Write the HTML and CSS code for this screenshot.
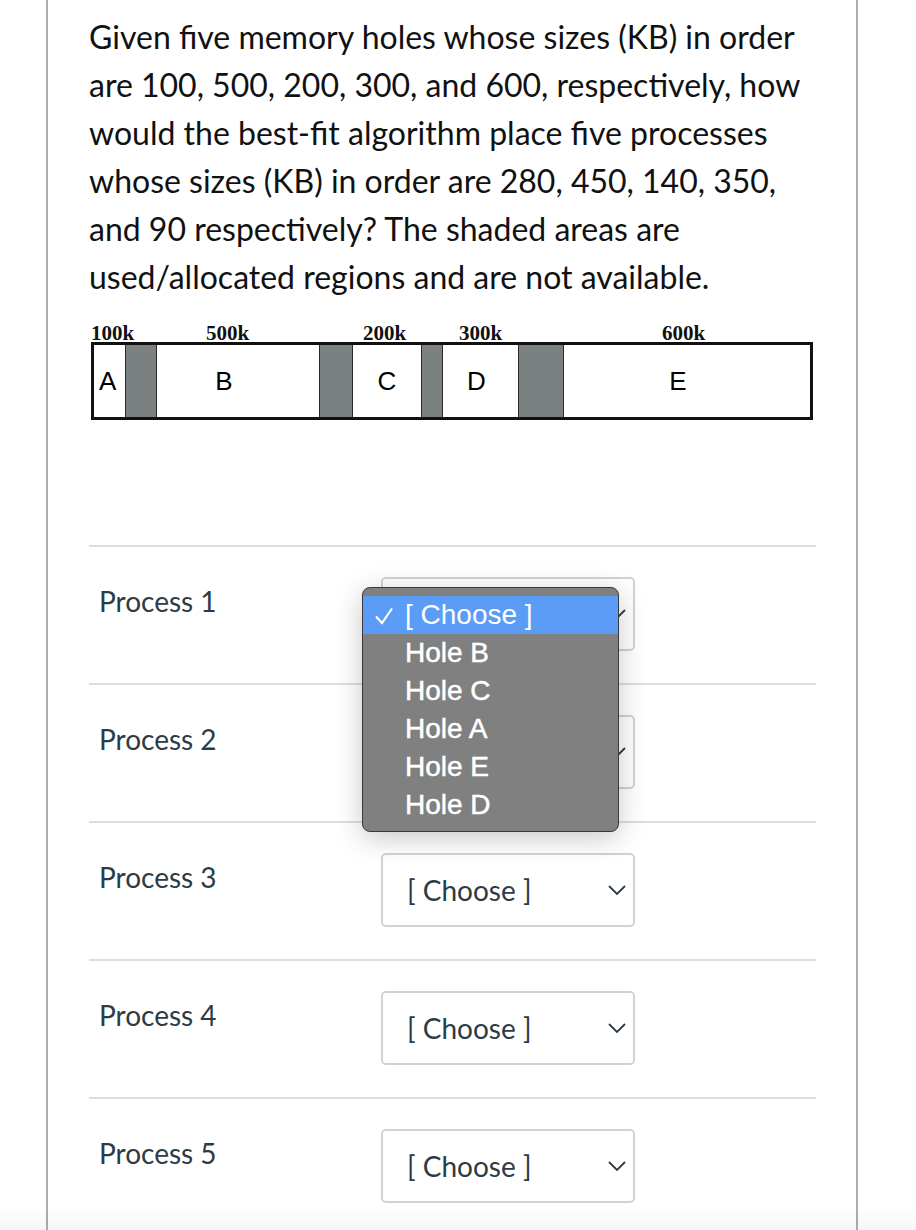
FILE: index.html
```html
<!DOCTYPE html>
<html lang="en">
<head>
    <meta charset="UTF-8">
    <meta name="viewport" content="width=device-width, initial-scale=1.0">
    <title>Best-fit Question</title>
    <link rel="stylesheet" href="styles.css">
</head>
<body>
    <div class="page">
        <p class="question">Given five memory holes whose sizes (KB) in order are 100, 500, 200, 300, and 600, respectively, how would the best-fit algorithm place five processes whose sizes (KB) in order are 280, 450, 140, 350, and 90 respectively? The shaded areas are used/allocated regions and are not available.</p>

        <div class="diagram">
            <div class="sizes">
                <span class="size s-a">100k</span>
                <span class="size s-b">500k</span>
                <span class="size s-c">200k</span>
                <span class="size s-d">300k</span>
                <span class="size s-e">600k</span>
            </div>
            <div class="bar">
                <div class="hole h-a">A</div>
                <div class="used u-1"></div>
                <div class="hole h-b">B</div>
                <div class="used u-2"></div>
                <div class="hole h-c">C</div>
                <div class="used u-3"></div>
                <div class="hole h-d">D</div>
                <div class="used u-4"></div>
                <div class="hole h-e">E</div>
            </div>
        </div>

        <div class="answers">
            <div class="answer-row">
                <div class="answer-label">Process 1</div>
                <div class="select-wrap">
                    <div class="select">
                        <span>[ Choose ]</span>
                        <svg class="chevron" width="18" height="10" viewBox="0 0 18 10"><polyline points="1,1 9,9 17,1" fill="none" stroke="#2d3b45" stroke-width="1.8"/></svg>
                    </div>
                    <div class="menu">
                        <div class="menu-item active">
                            <svg class="check" width="20" height="18" viewBox="0 0 20 18"><polyline points="2,9.5 8,16 18,1.5" fill="none" stroke="#fff" stroke-width="2.2"/></svg>
                            [ Choose ]
                        </div>
                        <div class="menu-item">Hole B</div>
                        <div class="menu-item">Hole C</div>
                        <div class="menu-item">Hole A</div>
                        <div class="menu-item">Hole E</div>
                        <div class="menu-item">Hole D</div>
                    </div>
                </div>
            </div>

            <div class="answer-row">
                <div class="answer-label">Process 2</div>
                <div class="select-wrap">
                    <div class="select">
                        <span>[ Choose ]</span>
                        <svg class="chevron" width="18" height="10" viewBox="0 0 18 10"><polyline points="1,1 9,9 17,1" fill="none" stroke="#2d3b45" stroke-width="1.8"/></svg>
                    </div>
                </div>
            </div>

            <div class="answer-row">
                <div class="answer-label">Process 3</div>
                <div class="select-wrap">
                    <div class="select">
                        <span>[ Choose ]</span>
                        <svg class="chevron" width="18" height="10" viewBox="0 0 18 10"><polyline points="1,1 9,9 17,1" fill="none" stroke="#2d3b45" stroke-width="1.8"/></svg>
                    </div>
                </div>
            </div>

            <div class="answer-row">
                <div class="answer-label">Process 4</div>
                <div class="select-wrap">
                    <div class="select">
                        <span>[ Choose ]</span>
                        <svg class="chevron" width="18" height="10" viewBox="0 0 18 10"><polyline points="1,1 9,9 17,1" fill="none" stroke="#2d3b45" stroke-width="1.8"/></svg>
                    </div>
                </div>
            </div>

            <div class="answer-row">
                <div class="answer-label">Process 5</div>
                <div class="select-wrap">
                    <div class="select">
                        <span>[ Choose ]</span>
                        <svg class="chevron" width="18" height="10" viewBox="0 0 18 10"><polyline points="1,1 9,9 17,1" fill="none" stroke="#2d3b45" stroke-width="1.8"/></svg>
                    </div>
                </div>
            </div>
        </div>
    </div>
    <div class="bottom-fade"></div>
</body>
</html>
```

FILE: styles.css
```css
body { margin: 0; background: #fff; font-family: Lato, "Open Sans", sans-serif; }
.page { margin-left: 46px; width: 767px; min-height: 100vh; border-left: 2px solid #adadad; border-right: 2px solid #adadad; padding: 13px 0 0 41px; }

.question { margin: 0; width: 727px; font-size: 32px; line-height: 48px; color: #111; }

/* memory diagram */
.diagram { margin: 20px 0 0 2px; width: 722px; }
.sizes { position: relative; height: 21px; font-family: "Liberation Serif", serif; font-weight: bold; font-size: 21px; line-height: 24px; color: #111; }
.size { position: absolute; top: 0; }
.s-a { left: 0; }
.s-b { left: 115px; }
.s-c { left: 272px; }
.s-d { left: 368px; }
.s-e { left: 571px; }
.bar { display: flex; height: 72px; border: 3px solid #111; font-family: "Liberation Sans", sans-serif; font-size: 26px; color: #000; }
.hole { display: flex; align-items: center; justify-content: center; background: #fff; }
.used { background: #7b8081; border-left: 1px solid #2a2a2a; border-right: 1px solid #2a2a2a; }
.h-a { width: 31px; justify-content: flex-start; padding-left: 5px; box-sizing: border-box; }
.u-1 { width: 30px; }
.h-b { width: 162px; padding-right: 28px; box-sizing: border-box; }
.u-2 { width: 32px; }
.h-c { width: 68px; }
.u-3 { width: 20px; }
.h-d { width: 75px; padding-right: 8px; box-sizing: border-box; }
.u-4 { width: 44px; }
.h-e { flex: 1; padding-right: 18px; }

/* answers */
.answers { margin-top: 125px; width: 727px; }
.answer-row { display: flex; border-top: 2px solid #dddddd; padding: 30px 0 32px; }
.answer-label { width: 282px; padding: 6px 0 0 10px; font-size: 28px; line-height: 36px; color: #2d3b45; }
.select-wrap { position: relative; }
.select { display: flex; align-items: center; justify-content: space-between; width: 254px; height: 74px; box-sizing: border-box; padding: 0 7px 0 24px; border: 2px solid #cfd3d6; border-radius: 5px; background: #fff; font-size: 28px; color: #2d3b45; }
.chevron { display: block; }

/* open native popup */
.menu { position: absolute; left: -19px; top: 10px; width: 257px; box-sizing: border-box; padding: 8px 0 7px; background: #808080; border: 1px solid #3a3a3a; border-radius: 8px; box-shadow: 0 6px 28px rgba(0,0,0,0.22); font-family: "Liberation Sans", sans-serif; font-size: 28px; color: #fff; z-index: 2; }
.menu-item { position: relative; height: 38px; line-height: 38px; padding-left: 42px; -webkit-text-stroke: 0.5px #fff; }
.menu-item.active { background: #5b9cf6; -webkit-text-stroke: 0; }
.check { position: absolute; left: 11px; top: 11px; }

.bottom-fade { position: fixed; left: 0; right: 0; bottom: 0; height: 24px; background: linear-gradient(rgba(0,0,0,0), rgba(0,0,0,0.035)); }
```
